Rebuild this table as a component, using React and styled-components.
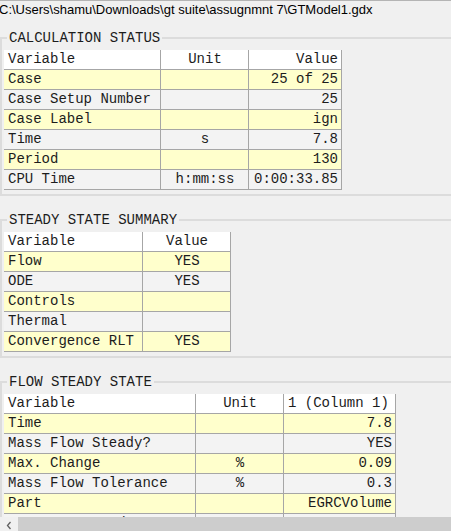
import styled, { createGlobalStyle } from 'styled-components'

const GlobalStyle = createGlobalStyle`
  html, body {
    margin: 0;
    padding: 0;
    background: #f0f0f0;
  }
  body {
    overflow: hidden;
  }
`;

const Window = styled.div`
  width: 451px;
  height: 531px;
  display: flex;
  flex-direction: column;
  overflow: hidden;
  background: #f0f0f0;
`;

const PathBar = styled.div`
  flex: none;
  height: 19px;
  border-top: 1px solid #b4b4b4;
  font-family: "Liberation Sans", Arial, sans-serif;
  font-size: 13px;
  line-height: 18px;
  color: #000;
  white-space: nowrap;
  text-indent: -1px;
`;

const Body = styled.div`
  flex: 1;
  min-height: 0;
  overflow: hidden;
  display: flex;
  flex-direction: column;
  gap: 17px;
  padding-top: 11px;
`;

const Group = styled.fieldset`
  flex: none;
  margin: 0;
  padding: 5px 0 4px 2px;
  border: 2px solid #dcdcdc;
  border-right: none;
  min-width: 0;
`;

const Legend = styled.legend`
  margin-left: 3px;
  padding: 0 2px;
  font-family: "Courier New", "Liberation Mono", monospace;
  font-size: 14px;
  line-height: 14px;
  color: #1c1c1c;
`;

const Grid = styled.div`
  display: flex;
  flex-direction: column;
  align-items: flex-start;
  font-family: "Courier New", "Liberation Mono", monospace;
  font-size: 14px;
  color: #1c1c1c;
`;

const tones = {
  head: '#ffffff',
  yellow: '#ffffcc',
  gray: '#f3f3f3',
};

const Row = styled.div`
  display: grid;
  grid-template-columns: ${p => p.$cols};
  height: 20px;
  background: ${p => tones[p.$tone]};
`;

const Cell = styled.div`
  box-sizing: border-box;
  border-right: 1px solid #a6a6a6;
  border-bottom: 1px solid #a6a6a6;
  padding: 0 3px 0 4px;
  line-height: 19px;
  white-space: nowrap;
  overflow: hidden;
  text-align: ${p => p.$align || 'left'};
`;

const Scrollbar = styled.div`
  flex: none;
  height: 14px;
  display: flex;
  background: #f0f0f0;
`;

const ArrowButton = styled.div`
  width: 18px;
  display: flex;
  justify-content: center;
  align-items: flex-end;
  padding-bottom: 1px;
  box-sizing: border-box;
`;

const Thumb = styled.div`
  flex: 1;
  background: #cdcdcd;
`;

const calcRows = [
  ['Case', '', '25 of 25'],
  ['Case Setup Number', '', '25'],
  ['Case Label', '', 'ign'],
  ['Time', 's', '7.8'],
  ['Period', '', '130'],
  ['CPU Time', 'h:mm:ss', '0:00:33.85'],
];

const summaryRows = [
  ['Flow', 'YES'],
  ['ODE', 'YES'],
  ['Controls', ''],
  ['Thermal', ''],
  ['Convergence RLT', 'YES'],
];

const flowRows = [
  ['Time', '', '7.8'],
  ['Mass Flow Steady?', '', 'YES'],
  ['Max. Change', '%', '0.09'],
  ['Mass Flow Tolerance', '%', '0.3'],
  ['Part', '', 'EGRCVolume'],
  ['Pressure Steady?', '', 'YES'],
];

function DataTable({ cols, aligns, header, rows }) {
  return (
    <Grid>
      <Row $cols={cols} $tone="head">
        {header.map((h, i) => (
          <Cell key={i} $align={h.align}>{h.label}</Cell>
        ))}
      </Row>
      {rows.map((r, i) => (
        <Row key={i} $cols={cols} $tone={i % 2 === 0 ? 'yellow' : 'gray'}>
          {r.map((v, j) => (
            <Cell key={j} $align={aligns[j]}>{v}</Cell>
          ))}
        </Row>
      ))}
    </Grid>
  );
}

function ChevronLeft() {
  return (
    <svg width="6" height="9" viewBox="0 0 6 9">
      <path d="M4.5 1 L1.5 4.5 L4.5 8" fill="none" stroke="#606060" strokeWidth="1.3" />
    </svg>
  );
}

export default function App() {
  return (
    <Window>
      <GlobalStyle />
      <PathBar>C:\Users\shamu\Downloads\gt suite\assugnmnt 7\GTModel1.gdx</PathBar>
      <Body>
        <Group>
          <Legend>CALCULATION STATUS</Legend>
          <DataTable
            cols="157px 88px 93px"
            aligns={['left', 'center', 'right']}
            header={[
              { label: 'Variable' },
              { label: 'Unit', align: 'center' },
              { label: 'Value', align: 'right' },
            ]}
            rows={calcRows}
          />
        </Group>
        <Group>
          <Legend>STEADY STATE SUMMARY</Legend>
          <DataTable
            cols="139px 88px"
            aligns={['left', 'center']}
            header={[
              { label: 'Variable' },
              { label: 'Value', align: 'center' },
            ]}
            rows={summaryRows}
          />
        </Group>
        <Group>
          <Legend>FLOW STEADY STATE</Legend>
          <DataTable
            cols="192px 88px 112px"
            aligns={['left', 'center', 'right']}
            header={[
              { label: 'Variable' },
              { label: 'Unit', align: 'center' },
              { label: '1 (Column 1)' },
            ]}
            rows={flowRows}
          />
        </Group>
      </Body>
      <Scrollbar>
        <ArrowButton><ChevronLeft /></ArrowButton>
        <Thumb />
      </Scrollbar>
    </Window>
  );
}
